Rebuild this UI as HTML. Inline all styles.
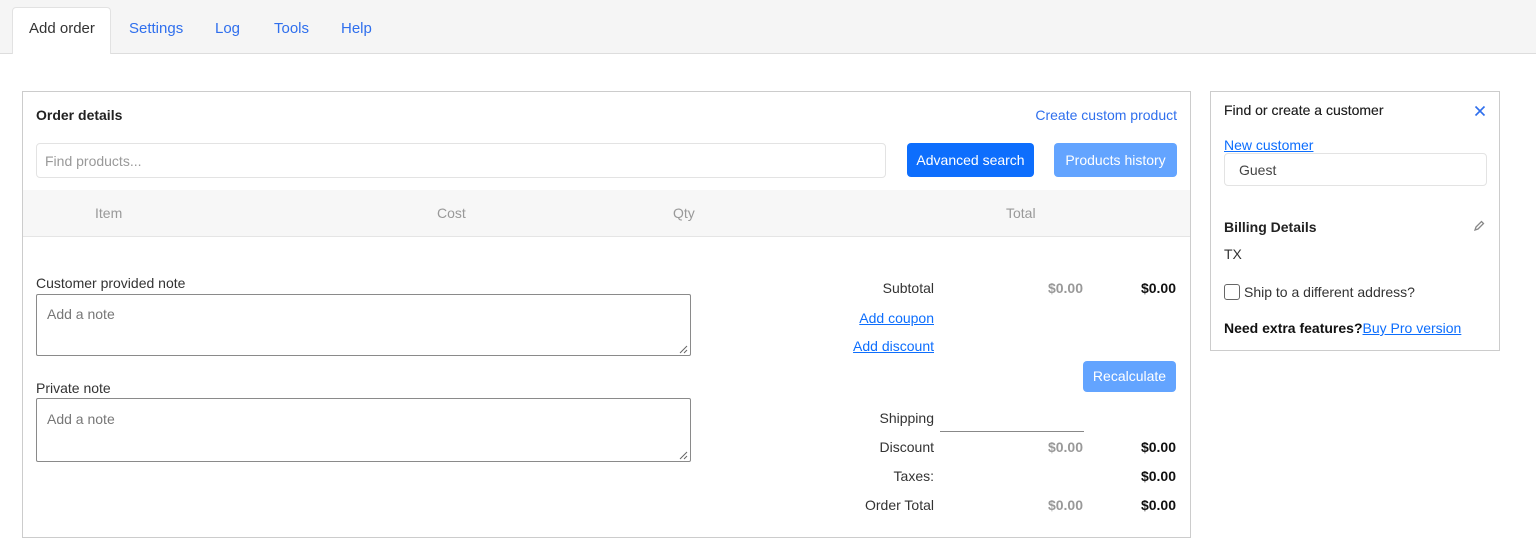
<!DOCTYPE html>
<html><head><meta charset="utf-8"><style>
*{box-sizing:border-box;margin:0;padding:0}
body{width:1536px;height:545px;background:#fff;font-family:"Liberation Sans",sans-serif;font-size:14px;color:#333;position:relative;overflow:hidden}
.a{position:absolute;white-space:nowrap;line-height:18px}
.r{text-align:right}
.lnk{color:#0d6efd;text-decoration:underline}
.blue{color:#2f6fed}
.g{color:#999;font-weight:bold}
.b{color:#111;font-weight:bold}
.box{position:absolute;border:1px solid #ccc}
.btn{position:absolute;border-radius:4px;color:#fff;text-align:center;font-size:14px}
.ta{position:absolute;border:1px solid #8a8a8a;border-radius:2px}
</style></head><body>
<div style="position:absolute;left:0;top:0;width:1536px;height:54px;background:#f5f5f5;border-bottom:1px solid #ddd"></div>
<div style="position:absolute;left:12px;top:7px;width:99px;height:47px;background:#fff;border:1px solid #e2e2e2;border-bottom:none;border-radius:4px 4px 0 0"></div>
<div class="a" style="left:29px;top:20px;font-size:15px;color:#333">Add order</div>
<div class="a blue" style="left:129px;top:20px;font-size:15px">Settings</div>
<div class="a blue" style="left:215px;top:20px;font-size:15px">Log</div>
<div class="a blue" style="left:274px;top:20px;font-size:15px">Tools</div>
<div class="a blue" style="left:341px;top:20px;font-size:15px">Help</div>

<div class="box" style="left:22px;top:91px;width:1169px;height:447px"></div>
<div class="a" style="left:36px;top:106px;font-weight:bold;color:#222">Order details</div>
<div class="a blue r" style="left:977px;width:200px;top:106px">Create custom product</div>
<div style="position:absolute;left:36px;top:143px;width:850px;height:35px;border:1px solid #e3e3e3;border-radius:4px"></div>
<div class="a" style="left:45px;top:152px;color:#999">Find products...</div>
<div class="btn" style="left:907px;top:143px;width:127px;height:34px;line-height:34px;background:#0d6efd">Advanced search</div>
<div class="btn" style="left:1054px;top:143px;width:123px;height:34px;line-height:34px;background:#63a4ff">Products history</div>
<div style="position:absolute;left:23px;top:190px;width:1167px;height:47px;background:#f7f7f7;border-bottom:1px solid #e5e5e5"></div>
<div class="a" style="left:95px;top:204px;color:#999">Item</div>
<div class="a" style="left:437px;top:204px;color:#999">Cost</div>
<div class="a" style="left:673px;top:204px;color:#999">Qty</div>
<div class="a" style="left:1006px;top:204px;color:#999">Total</div>

<div class="a" style="left:36px;top:274px">Customer provided note</div>
<div class="ta" style="left:36px;top:294px;width:655px;height:62px"></div>
<svg style="position:absolute;left:678px;top:344px" width="10" height="10"><path d="M2 9L9 2M6 9L9 6" stroke="#666" stroke-width="1"/></svg>
<div class="a" style="left:47px;top:305px;color:#777">Add a note</div>
<div class="a" style="left:36px;top:379px">Private note</div>
<div class="ta" style="left:36px;top:398px;width:655px;height:64px"></div>
<svg style="position:absolute;left:678px;top:450px" width="10" height="10"><path d="M2 9L9 2M6 9L9 6" stroke="#666" stroke-width="1"/></svg>
<div class="a" style="left:47px;top:410px;color:#777">Add a note</div>

<div class="a r" style="left:734px;width:200px;top:279px">Subtotal</div>
<div class="a r g" style="left:983px;width:100px;top:279px">$0.00</div>
<div class="a r b" style="left:1076px;width:100px;top:279px">$0.00</div>
<div class="a r lnk" style="left:734px;width:200px;top:309px">Add coupon</div>
<div class="a r lnk" style="left:734px;width:200px;top:337px">Add discount</div>
<div class="btn" style="left:1083px;top:361px;width:93px;height:31px;line-height:31px;background:#63a4ff">Recalculate</div>
<div class="a r" style="left:734px;width:200px;top:409px">Shipping</div>
<div style="position:absolute;left:940px;top:431px;width:144px;height:1px;background:#888"></div>
<div class="a r" style="left:734px;width:200px;top:438px">Discount</div>
<div class="a r g" style="left:983px;width:100px;top:438px">$0.00</div>
<div class="a r b" style="left:1076px;width:100px;top:438px">$0.00</div>
<div class="a r" style="left:734px;width:200px;top:467px">Taxes:</div>
<div class="a r b" style="left:1076px;width:100px;top:467px">$0.00</div>
<div class="a r" style="left:734px;width:200px;top:496px">Order Total</div>
<div class="a r g" style="left:983px;width:100px;top:496px">$0.00</div>
<div class="a r b" style="left:1076px;width:100px;top:496px">$0.00</div>

<div class="box" style="left:1210px;top:91px;width:290px;height:260px"></div>
<div class="a" style="left:1224px;top:101px;color:#222;text-shadow:0 0 0.3px #222">Find or create a customer</div>
<svg style="position:absolute;left:1474px;top:105px" width="12" height="12" viewBox="0 0 12 12"><path d="M1.5 1.5L10.5 10.5M10.5 1.5L1.5 10.5" stroke="#2f6fed" stroke-width="1.6"/></svg>
<div class="a lnk" style="left:1224px;top:136px">New customer</div>
<div style="position:absolute;left:1224px;top:153px;width:263px;height:33px;border:1px solid #e3e3e3;border-radius:4px"></div>
<div class="a" style="left:1239px;top:161px;color:#444">Guest</div>
<div class="a" style="left:1224px;top:218px;font-weight:bold;color:#222">Billing Details</div>
<svg style="position:absolute;left:1473px;top:220px" width="12" height="12" viewBox="0 0 12 12"><path d="M2 10L3 7L8.5 1.5L10.5 3.5L5 9Z" fill="none" stroke="#888" stroke-width="1.3"/></svg>
<div class="a" style="left:1224px;top:245px">TX</div>
<div style="position:absolute;left:1224px;top:284px;width:16px;height:16px;border:1px solid #666;border-radius:3px"></div>
<div class="a" style="left:1244px;top:283px">Ship to a different address?</div>
<div class="a" style="left:1224px;top:319px"><b style="color:#111">Need extra features?</b><span class="lnk">Buy Pro version</span></div>
</body></html>
